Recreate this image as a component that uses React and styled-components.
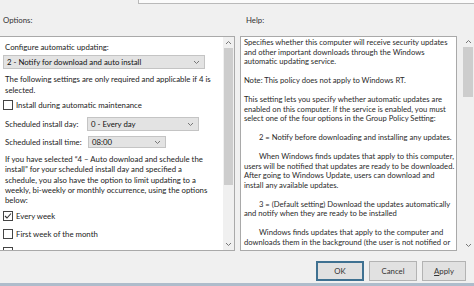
import React from 'react';
import styled, { createGlobalStyle } from 'styled-components';

const Global = createGlobalStyle`
  html, body { margin: 0; padding: 0; background: #f0f0f0; }
  body { font-family: Lato, 'Noto Sans', sans-serif; color: #222; }
`;

const Window = styled.div`
  width: 474px;
  height: 286px;
  background: #f0f0f0;
  display: flex;
  flex-direction: column;
  overflow: hidden;
  font-size: 7.8px;
`;

const TopField = styled.div`
  height: 3px;
  margin-left: 138px;
  background: #fbfbfb;
  border-left: 1px solid #b9b9b9;
  border-bottom: 1px solid #b9b9b9;
`;

const LabelRow = styled.div`
  height: 32px;
  display: flex;
  align-items: center;
`;

const Label = styled.div`
  width: ${p => p.w}px;
  padding-left: ${p => p.pad}px;
  color: #333;
`;

const Panes = styled.div`
  height: 215px;
  display: flex;
  gap: 5px;
`;

const OptionsPane = styled.div`
  width: 236px;
  margin-left: -1px;
  border: 1px solid #a9a9a9;
  background: #fff;
  display: flex;
  overflow: hidden;
`;

const OptionsBody = styled.div`
  flex: 1;
  padding: 5px 0 0 5px;
  display: flex;
  flex-direction: column;
  overflow: hidden;
`;

const Line = styled.div`
  white-space: nowrap;
  line-height: ${p => p.lh || 10}px;
  padding-left: ${p => p.indent || 0}px;
`;

const Block = styled.div`
  margin-top: ${p => p.mt || 0}px;
`;

const Select = styled.div`
  box-sizing: border-box;
  width: ${p => p.w}px;
  height: ${p => p.h || 14}px;
  margin-left: ${p => p.ml || 0}px;
  margin-top: ${p => p.mt || 0}px;
  background: #e3e3e3;
  border: 1px solid #c4c4c4;
  display: flex;
  align-items: center;
  justify-content: space-between;
  padding: 0 4px 0 3px;
  color: #111;
  white-space: nowrap;
  flex-shrink: 0;
`;

const FieldRow = styled.div`
  display: flex;
  align-items: center;
  margin-top: ${p => p.mt || 0}px;
`;

const FieldLabel = styled.div`
  width: 82px;
  white-space: nowrap;
`;

const CheckRow = styled.div`
  display: flex;
  align-items: center;
  gap: 3px;
  height: 10px;
  margin-top: ${p => p.mt || 0}px;
  margin-left: -2px;
  white-space: nowrap;
  flex-shrink: 0;
`;

const Box = styled.div`
  box-sizing: border-box;
  width: 10px;
  height: 10px;
  border: 1px solid #444;
  background: #fff;
  display: flex;
  align-items: center;
  justify-content: center;
  flex-shrink: 0;
`;

const ScrollBar = styled.div`
  width: ${p => p.w}px;
  background: #f0f0f0;
  display: flex;
  flex-direction: column;
  align-items: center;
  flex-shrink: 0;
`;

const Arrow = styled.div`
  height: 11px;
  width: 100%;
  display: flex;
  align-items: center;
  justify-content: center;
`;

const Thumb = styled.div`
  width: ${p => p.w}px;
  height: ${p => p.h}px;
  background: #cdcdcd;
`;

const Spacer = styled.div`
  flex: 1;
`;

const HelpBox = styled.div`
  width: 219px;
  border: 1px solid #a9a9a9;
  background: #fff;
  padding: 1px 0 0 3px;
  box-sizing: border-box;
  overflow: hidden;
  color: #2a2a2a;
  font-size: 7.65px;
`;

const Footer = styled.div`
  height: 32px;
  display: flex;
  justify-content: flex-end;
  align-items: flex-start;
  padding: 10px 8px 0 0;
  box-sizing: border-box;
  gap: 5px;
`;

const Button = styled.div`
  box-sizing: border-box;
  width: ${p => p.w}px;
  height: 20px;
  background: #e1e1e1;
  border: ${p => (p.focus ? '2px solid #3f7191' : '1px solid #b3b3b3')};
  display: flex;
  align-items: center;
  justify-content: center;
  color: #333;
`;

const BottomStrip = styled.div`
  height: 3px;
  background: #aebccb;
`;

const Chevron = ({ up }) => (
  <svg width="7" height="5" viewBox="0 0 7 5">
    <path d={up ? 'M1 4 L3.5 1.5 L6 4' : 'M1 1 L3.5 3.5 L6 1'} fill="none" stroke="#777" strokeWidth="1" />
  </svg>
);

const Check = ({ checked }) => (
  <Box>
    {checked && (
      <svg width="8" height="8" viewBox="0 0 8 8">
        <path d="M1 4 L3 6 L7 1.5" fill="none" stroke="#333" strokeWidth="1.1" />
      </svg>
    )}
  </Box>
);

const helpLines = [
  ['Specifies whether this computer will receive security updates'],
  ['and other important downloads through the Windows'],
  ['automatic updating service.'],
  [''],
  ['Note: This policy does not apply to Windows RT.'],
  [''],
  ['This setting lets you specify whether automatic updates are'],
  ['enabled on this computer. If the service is enabled, you must'],
  ['select one of the four options in the Group Policy Setting:'],
  [''],
  ['2 = Notify before downloading and installing any updates.', 15],
  [''],
  ['When Windows finds updates that apply to this computer,', 15],
  ['users will be notified that updates are ready to be downloaded.'],
  ['After going to Windows Update, users can download and'],
  ['install any available updates.'],
  [''],
  ['3 = (Default setting) Download the updates automatically', 15],
  ['and notify when they are ready to be installed'],
  [''],
  ['Windows finds updates that apply to the computer and', 15],
  ['downloads them in the background (the user is not notified or'],
];

export default function App() {
  return (
    <Window>
      <Global />
      <TopField />
      <LabelRow>
        <Label w={243} pad={3}>Options:</Label>
        <Label w={200} pad={0}>Help:</Label>
      </LabelRow>
      <Panes>
        <OptionsPane>
          <OptionsBody>
            <Line>Configure automatic updating:</Line>
            <Select w={202} mt={3} ml={-2}>
              <span>2 - Notify for download and auto install</span>
              <Chevron />
            </Select>
            <Block mt={5}>
              <Line lh={10.5}>The following settings are only required and applicable if 4 is</Line>
              <Line lh={10.5}>selected.</Line>
            </Block>
            <CheckRow mt={5}>
              <Check />
              <span>Install during automatic maintenance</span>
            </CheckRow>
            <FieldRow mt={7}>
              <FieldLabel>Scheduled install day:</FieldLabel>
              <Select w={112}>
                <span>0 - Every day</span>
                <Chevron />
              </Select>
            </FieldRow>
            <FieldRow mt={5}>
              <FieldLabel>Scheduled install time:</FieldLabel>
              <Select w={78} h={12} ml={1}>
                <span>08:00</span>
                <Chevron />
              </Select>
            </FieldRow>
            <Block mt={6}>
              <Line lh={10.3}>If you have selected “4 – Auto download and schedule the</Line>
              <Line lh={10.3}>install” for your scheduled install day and specified a</Line>
              <Line lh={10.3}>schedule, you also have the option to limit updating to a</Line>
              <Line lh={10.3}>weekly, bi-weekly or monthly occurrence, using the options</Line>
              <Line lh={10.3}>below:</Line>
            </Block>
            <CheckRow mt={6}>
              <Check checked />
              <span>Every week</span>
            </CheckRow>
            <CheckRow mt={8}>
              <Check />
              <span>First week of the month</span>
            </CheckRow>
            <CheckRow mt={8}>
              <Check />
            </CheckRow>
          </OptionsBody>
          <ScrollBar w={11}>
            <Arrow><Chevron up /></Arrow>
            <Thumb w={9} h={137} />
            <Spacer />
            <Arrow><Chevron /></Arrow>
          </ScrollBar>
        </OptionsPane>
        <HelpBox>
          {helpLines.map(([t, indent], i) => (
            <Line key={i} lh={9.52} indent={indent}>{t || '\u00a0'}</Line>
          ))}
        </HelpBox>
        <ScrollBar w={12}>
          <Arrow><Chevron up /></Arrow>
          <Thumb w={10} h={50} />
          <Spacer />
          <Arrow><Chevron /></Arrow>
        </ScrollBar>
      </Panes>
      <Footer>
        <Button w={48} focus>OK</Button>
        <Button w={48}>Cancel</Button>
        <Button w={44}><span><u>A</u>pply</span></Button>
      </Footer>
      <BottomStrip />
    </Window>
  );
}
